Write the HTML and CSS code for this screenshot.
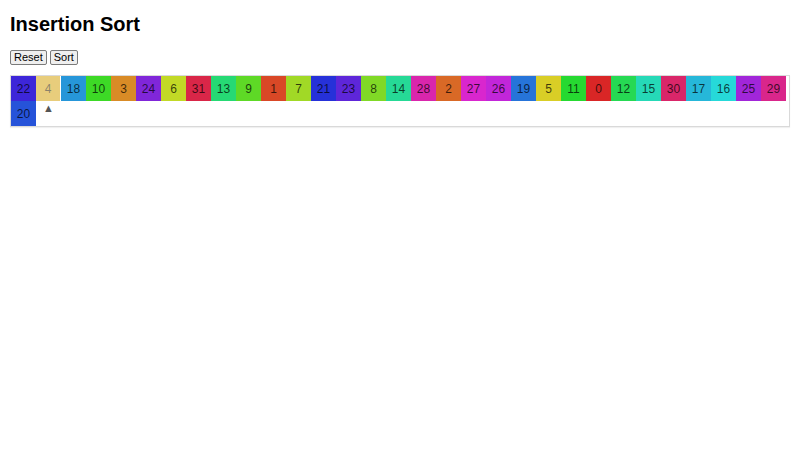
FILE: index.html
```html
<!DOCTYPE html>
<html>
<head>
<meta charset="utf-8">
<title>Insertion Sort</title>
<link rel="stylesheet" href="styles.css">
</head>
<body>
<h1 class="title">Insertion Sort</h1>
<div class="controls">
  <button class="btn">Reset</button>
  <button class="btn">Sort</button>
</div>
<div class="array">
  <div class="cell" style="background:hsl(247.5,70%,50%)">22</div>
  <div class="cell key" style="background:hsl(45,70%,50%)">4</div>
  <div class="cell" style="background:hsl(202.5,70%,50%)">18</div>
  <div class="cell" style="background:hsl(112.5,70%,50%)">10</div>
  <div class="cell" style="background:hsl(33.75,70%,50%)">3</div>
  <div class="cell" style="background:hsl(270,70%,50%)">24</div>
  <div class="cell" style="background:hsl(67.5,70%,50%)">6</div>
  <div class="cell" style="background:hsl(348.75,70%,50%)">31</div>
  <div class="cell" style="background:hsl(146.25,70%,50%)">13</div>
  <div class="cell" style="background:hsl(101.25,70%,50%)">9</div>
  <div class="cell" style="background:hsl(11.25,70%,50%)">1</div>
  <div class="cell" style="background:hsl(78.75,70%,50%)">7</div>
  <div class="cell" style="background:hsl(236.25,70%,50%)">21</div>
  <div class="cell" style="background:hsl(258.75,70%,50%)">23</div>
  <div class="cell" style="background:hsl(90,70%,50%)">8</div>
  <div class="cell" style="background:hsl(157.5,70%,50%)">14</div>
  <div class="cell" style="background:hsl(315,70%,50%)">28</div>
  <div class="cell" style="background:hsl(22.5,70%,50%)">2</div>
  <div class="cell" style="background:hsl(303.75,70%,50%)">27</div>
  <div class="cell" style="background:hsl(292.5,70%,50%)">26</div>
  <div class="cell" style="background:hsl(213.75,70%,50%)">19</div>
  <div class="cell" style="background:hsl(56.25,70%,50%)">5</div>
  <div class="cell" style="background:hsl(123.75,70%,50%)">11</div>
  <div class="cell" style="background:hsl(0,70%,50%)">0</div>
  <div class="cell" style="background:hsl(135,70%,50%)">12</div>
  <div class="cell" style="background:hsl(168.75,70%,50%)">15</div>
  <div class="cell" style="background:hsl(337.5,70%,50%)">30</div>
  <div class="cell" style="background:hsl(191.25,70%,50%)">17</div>
  <div class="cell" style="background:hsl(180,70%,50%)">16</div>
  <div class="cell" style="background:hsl(281.25,70%,50%)">25</div>
  <div class="cell" style="background:hsl(326.25,70%,50%)">29</div>
  <div class="cell" style="background:hsl(225,70%,50%)">20</div>
  <span class="pointer">&#9650;</span>
</div>
</body>
</html>
```

FILE: styles.css
```css
html, body {
  margin: 0;
  background: #ffffff;
}

body {
  padding: 10px;
  font-family: "Liberation Sans", Arial, sans-serif;
  color: #000;
}

.title {
  font-size: 20px;
  line-height: 23px;
  font-weight: bold;
  margin: 3px 0 14px 0;
}

.controls {
  display: flex;
  gap: 3px;
  margin-bottom: 10px;
}

.btn {
  font-family: "Liberation Sans", Arial, sans-serif;
  font-size: 11px;
  line-height: 13px;
  height: 15px;
  padding: 0 3px;
  margin: 0;
  border: 1px solid #7a7a7a;
  border-radius: 2px;
  background: #efefef;
  color: #000;
}

.array {
  position: relative;
  display: flex;
  flex-wrap: wrap;
  border: 1px solid #d9d9d9;
  box-shadow: 0 1px 1px rgba(0, 0, 0, 0.06);
}

.cell {
  box-sizing: border-box;
  width: 25px;
  height: 25px;
  display: flex;
  align-items: center;
  justify-content: center;
  font-size: 12px;
  color: rgba(0, 0, 0, 0.72);
}

.cell.key {
  opacity: 0.6;
  border-right: 1px solid #ffffff;
}

.pointer {
  position: absolute;
  left: 32px;
  top: 26px;
  font-size: 11px;
  line-height: 12px;
  color: #555555;
}
```
